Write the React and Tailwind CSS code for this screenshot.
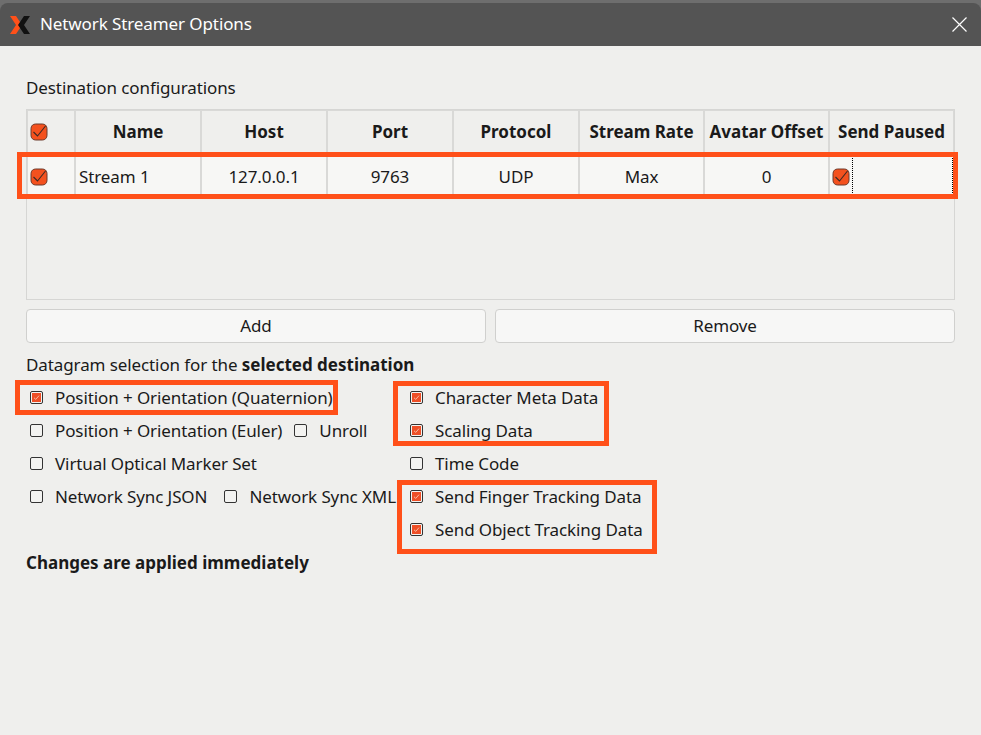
const font = "font-['Noto_Sans','Open_Sans',sans-serif]";

function RoundCheck() {
  return (
    <svg width="18" height="18" viewBox="0 0 18 18" className="block shrink-0">
      <rect x="1" y="1" width="16" height="16" rx="4.5" fill="#f4511e" stroke="#6b3a2c" strokeWidth="1" />
      <path d="M3.5 9 L7.5 13 L15.5 3" fill="none" stroke="#3a2a26" strokeWidth="1.1" />
    </svg>
  );
}

function Box({ checked }) {
  return (
    <span className="flex h-[13px] w-[13px] shrink-0 items-center justify-center rounded-[2px] border border-[#333333] bg-[#f3f3f1]">
      {checked && (
        <span className="flex h-[9px] w-[9px] items-center justify-center bg-[#ee4f27]">
          <svg width="7" height="7" viewBox="0 0 7 7" className="block">
            <path d="M1 3.8 L2.8 5.4 L6 1.6" fill="none" stroke="#f8b8a0" strokeWidth="1" />
          </svg>
        </span>
      )}
    </span>
  );
}

function Opt({ label, checked, className = "" }) {
  return (
    <div className={`flex items-center gap-[12px] whitespace-nowrap ${className}`}>
      <Box checked={checked} />
      <span>{label}</span>
    </div>
  );
}

const headers = ["Name", "Host", "Port", "Protocol", "Stream Rate", "Avatar Offset", "Send Paused"];
const cells = ["127.0.0.1", "9763", "UDP", "Max", "0"];
const colClass = "grid grid-cols-[46px_126px_126px_126px_126px_125px_125px_125px]";

function Frame({ className }) {
  return <div className={`pointer-events-none absolute border-[5px] border-[#ff5019] ${className}`} />;
}

export default function App() {
  return (
    <div className={`relative flex h-[735px] w-[981px] flex-col overflow-hidden bg-[#efefed] text-[17px] tracking-[-0.1px] text-[#1a1a1a] ${font}`}>
      <div className="bg-[#6e6e6e] pt-[3px]">
        <div className="flex h-[43px] items-center rounded-t-[8px] bg-[#545454] pl-[10px] pr-[14px] text-white">
          <svg width="21" height="20" viewBox="0 0 21 20" className="block">
            <polygon points="0,1 6,1 12,10 6,19 0,19 6,10" fill="#ff5019" />
            <polygon points="14,1 20,1 14,10 20,19 14,19 8,10" fill="#111111" />
          </svg>
          <span className="ml-[9px] pb-[2px]">Network Streamer Options</span>
          <svg width="15" height="15" viewBox="0 0 15 15" className="ml-auto block">
            <path d="M0.5 0.5 L14.5 14.5 M14.5 0.5 L0.5 14.5" stroke="#ffffff" strokeWidth="1.2" fill="none" />
          </svg>
        </div>
      </div>

      <div className="flex flex-col px-[26px]">
        <div className="mt-[29px] h-[26px] leading-[26px]">Destination configurations</div>

        <div className="mt-[8px] h-[191px] border border-[#d6d6d4]">
          <div className={`${colClass} h-[44px] border-x border-t border-b-2 border-[#d9d9d7] font-bold tracking-normal`}>
            <div className="flex items-center pl-[2px]"><RoundCheck /></div>
            {headers.map((h) => (
              <div key={h} className="flex items-center justify-center whitespace-nowrap border-l-2 border-[#d9d9d7]">{h}</div>
            ))}
          </div>
          <div className={`${colClass} h-[45px] border-x border-[#d9d9d7] bg-[#f7f7f5]`}>
            <div className="flex items-center pl-[2px]"><RoundCheck /></div>
            <div className="flex items-center border-l-2 border-[#d9d9d7] pl-[3px]">Stream 1</div>
            {cells.map((c) => (
              <div key={c} className="flex items-center justify-center border-l-2 border-[#d9d9d7]">{c}</div>
            ))}
            <div className="flex items-center border-l-2 border-[#d9d9d7] pl-[2px]">
              <RoundCheck />
              <div className="ml-[2px] h-full flex-1 border-x border-dotted border-black" />
            </div>
          </div>
        </div>

        <div className="mt-[9px] grid grid-cols-2 gap-[9px]">
          <button className="h-[34px] rounded-[4px] border border-[#d0d0ce] bg-[#f7f7f6] text-center">Add</button>
          <button className="h-[34px] rounded-[4px] border border-[#d0d0ce] bg-[#f7f7f6] text-center">Remove</button>
        </div>

        <div className="mt-[9px] h-[26px] leading-[26px]">
          Datagram selection for the <b className="tracking-normal">selected destination</b>
        </div>

        <div className="mt-[3px] grid grid-cols-[380px_1fr] pl-[4px] [&>*]:h-[33px]">
          <Opt label="Position + Orientation (Quaternion)" checked />
          <Opt label="Character Meta Data" checked />
          <div className="flex items-center">
            <Opt label="Position + Orientation (Euler)" />
            <Opt label="Unroll" className="ml-[12px]" />
          </div>
          <Opt label="Scaling Data" checked />
          <Opt label="Virtual Optical Marker Set" />
          <Opt label="Time Code" />
          <div className="flex items-center">
            <Opt label="Network Sync JSON" />
            <Opt label="Network Sync XML" className="ml-[17px]" />
          </div>
          <Opt label="Send Finger Tracking Data" checked />
          <div />
          <Opt label="Send Object Tracking Data" checked />
        </div>

        <div className="mt-[4px] font-bold tracking-normal leading-[26px]">Changes are applied immediately</div>
      </div>

      <Frame className="left-[17px] top-[152px] h-[47px] w-[941px]" />
      <Frame className="left-[15px] top-[380px] h-[35px] w-[323px]" />
      <Frame className="left-[393px] top-[381px] h-[65px] w-[216px]" />
      <Frame className="left-[397px] top-[480px] h-[74px] w-[260px]" />
    </div>
  );
}
